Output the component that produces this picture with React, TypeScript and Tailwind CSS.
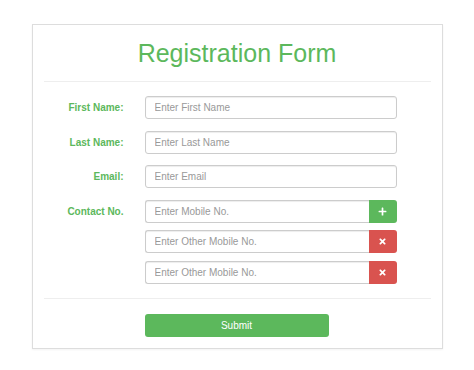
import { FaPlus, FaTimes } from "react-icons/fa";

const inputClass =
  "h-[23px] border border-[#cccccc] bg-white px-[9px] text-[10px] text-[#555] placeholder:text-[#999] outline-none shadow-[inset_0_1px_1px_rgba(0,0,0,0.075)]";

const Label = ({ children }: { children: React.ReactNode }) => (
  <label className="flex h-[23px] w-[80px] shrink-0 items-center justify-end text-[10px] font-bold text-[#5cb85c]">
    {children}
  </label>
);

const FieldRow = ({ label, placeholder }: { label: string; placeholder: string }) => (
  <div className="flex items-start gap-[21px]">
    <Label>{label}</Label>
    <input className={`${inputClass} w-[252px] rounded-[3px]`} placeholder={placeholder} />
  </div>
);

const PhoneInput = ({ placeholder, add }: { placeholder: string; add?: boolean }) => (
  <div className="flex w-[252px]">
    <input className={`${inputClass} min-w-0 flex-1 rounded-l-[3px] border-r-0`} placeholder={placeholder} />
    <button
      type="button"
      className={`flex h-[23px] w-[28px] shrink-0 items-center justify-center rounded-r-[3px] text-white ${
        add ? "bg-[#5cb85c]" : "bg-[#d9534f]"
      }`}
    >
      {add ? <FaPlus className="h-[9px] w-[9px]" /> : <FaTimes className="h-[9px] w-[9px]" />}
    </button>
  </div>
);

export default function App() {
  return (
    <div className="min-h-screen bg-white pt-[24px] [font-family:'Liberation_Sans',Arial,sans-serif]">
      <div className="mx-auto w-[411px] border border-[#dddddd] bg-white px-[11px] pb-[11px] shadow-[0_1px_2px_rgba(0,0,0,0.05)]">
        <div className="flex h-[56px] items-center justify-center">
          <h1 className="text-[25px] leading-none text-[#5cb85c]">Registration Form</h1>
        </div>
        <div className="border-t border-[#eeeeee]" />

        <form className="mt-[14px] flex flex-col gap-[11.5px]">
          <FieldRow label="First Name:" placeholder="Enter First Name" />
          <FieldRow label="Last Name:" placeholder="Enter Last Name" />
          <FieldRow label="Email:" placeholder="Enter Email" />
          <div className="flex items-start gap-[21px]">
            <Label>Contact No.</Label>
            <div className="flex flex-col gap-[7.7px]">
              <PhoneInput placeholder="Enter Mobile No." add />
              <PhoneInput placeholder="Enter Other Mobile No." />
              <PhoneInput placeholder="Enter Other Mobile No." />
            </div>
          </div>
        </form>

        <div className="mt-[14px] border-t border-[#eeeeee]" />
        <div className="mt-[13px] pl-[101px]">
          <button
            type="button"
            className="h-[23px] w-[184px] rounded-[3px] bg-[#5cb85c] text-[10px] text-white"
          >
            Submit
          </button>
        </div>
      </div>
    </div>
  );
}
